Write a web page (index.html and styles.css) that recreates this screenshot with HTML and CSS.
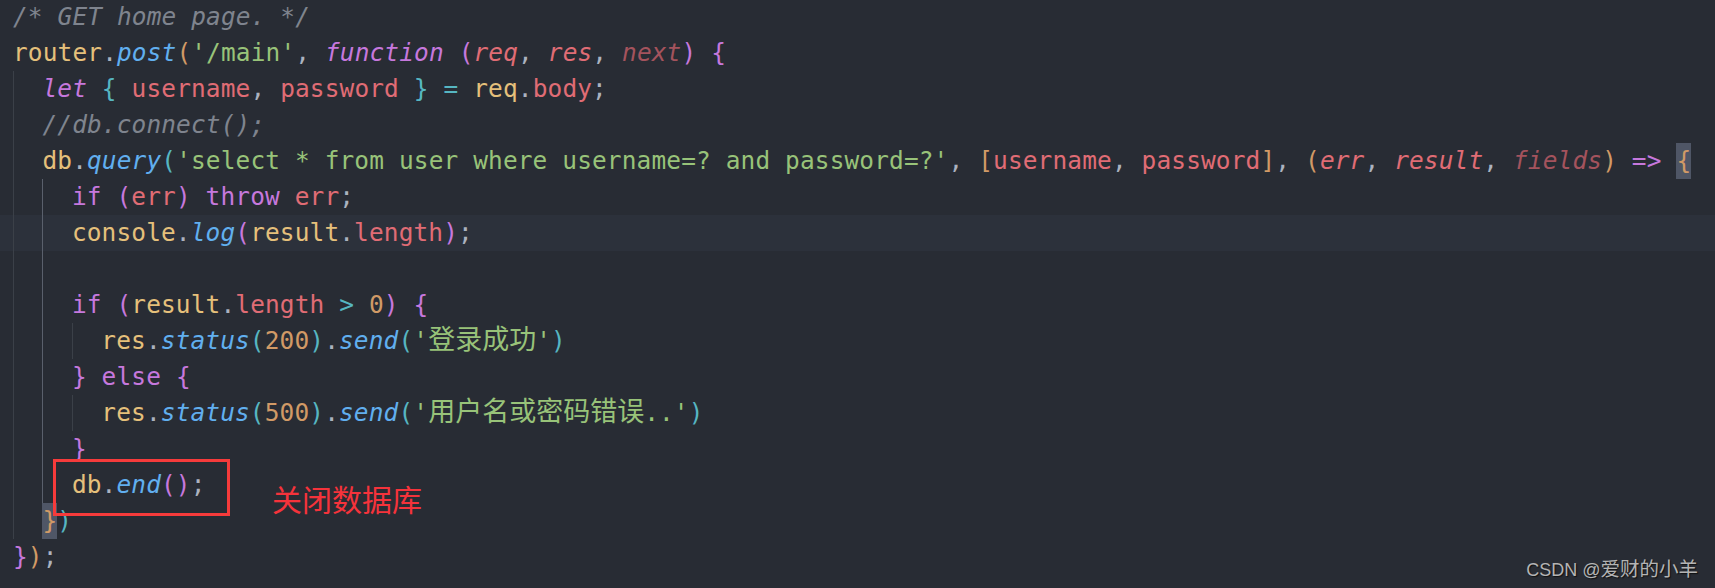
FILE: index.html
```html
<!DOCTYPE html>
<html lang="zh-CN">
<head>
<meta charset="utf-8">
<title>router.post /main</title>
<link rel="stylesheet" href="styles.css">
</head>
<body>
<div class="editor">
  <div class="code">
    <div class="ln"><span class="cm">/* GET home page. */</span></div>
    <div class="ln"><span class="y">router</span><span class="p">.</span><span class="b i">post</span><span class="o">(</span><span class="s">'/main'</span><span class="p">, </span><span class="k i">function</span> <span class="k">(</span><span class="r i">req</span><span class="p">, </span><span class="r i">res</span><span class="p">, </span><span class="r i fd">next</span><span class="k">)</span> <span class="k">{</span></div>
    <div class="ln"><span class="g"></span><span class="k i">let</span> <span class="cy">{</span> <span class="r">username</span><span class="p">,</span> <span class="r">password</span> <span class="cy">}</span> <span class="cy">=</span> <span class="y">req</span><span class="p">.</span><span class="r">body</span><span class="p">;</span></div>
    <div class="ln"><span class="g"></span><span class="cm">//db.connect();</span></div>
    <div class="ln"><span class="g"></span><span class="y">db</span><span class="p">.</span><span class="b i">query</span><span class="cy">(</span><span class="s">'select * from user where username=? and password=?'</span><span class="p">, </span><span class="o">[</span><span class="r">username</span><span class="p">, </span><span class="r">password</span><span class="o">]</span><span class="p">, </span><span class="o">(</span><span class="r i">err</span><span class="p">, </span><span class="r i">result</span><span class="p">, </span><span class="r i fd">fields</span><span class="o">)</span> <span class="k">=&gt;</span> <span class="o mt">{</span></div>
    <div class="ln"><span class="g"></span><span class="g ga"></span><span class="k">if</span> <span class="k">(</span><span class="r">err</span><span class="k">)</span> <span class="k">throw</span> <span class="r">err</span><span class="p">;</span></div>
    <div class="ln hl"><span class="g"></span><span class="g ga"></span><span class="y">console</span><span class="p">.</span><span class="b i">log</span><span class="k">(</span><span class="y">result</span><span class="p">.</span><span class="r">length</span><span class="k">)</span><span class="p">;</span></div>
    <div class="ln"><span class="g"></span><span class="g ga"></span></div>
    <div class="ln"><span class="g"></span><span class="g ga"></span><span class="k">if</span> <span class="k">(</span><span class="y">result</span><span class="p">.</span><span class="r">length</span> <span class="cy">&gt;</span> <span class="n">0</span><span class="k">)</span> <span class="k">{</span></div>
    <div class="ln"><span class="g"></span><span class="g ga"></span><span class="g"></span><span class="y">res</span><span class="p">.</span><span class="b i">status</span><span class="cy">(</span><span class="n">200</span><span class="cy">)</span><span class="p">.</span><span class="b i">send</span><span class="cy">(</span><span class="s">'<span class="zh">登录成功</span>'</span><span class="cy">)</span></div>
    <div class="ln"><span class="g"></span><span class="g ga"></span><span class="k">}</span> <span class="k">else</span> <span class="k">{</span></div>
    <div class="ln"><span class="g"></span><span class="g ga"></span><span class="g"></span><span class="y">res</span><span class="p">.</span><span class="b i">status</span><span class="cy">(</span><span class="n">500</span><span class="cy">)</span><span class="p">.</span><span class="b i">send</span><span class="cy">(</span><span class="s">'<span class="zh">用户名或密码错误</span>..'</span><span class="cy">)</span></div>
    <div class="ln"><span class="g"></span><span class="g ga"></span><span class="k">}</span></div>
    <div class="ln"><span class="g"></span><span class="g ga"></span><span class="y">db</span><span class="p">.</span><span class="b i">end</span><span class="k">()</span><span class="p">;</span></div>
    <div class="ln"><span class="g"></span><span class="o mt">}</span><span class="cy">)</span></div>
    <div class="ln"><span class="k">}</span><span class="o">)</span><span class="p">;</span></div>
  </div>
  <div class="mark-box"></div>
  <div class="mark-note">关闭数据库</div>
  <div class="watermark">CSDN @<span class="wm-zh">爱财的小羊</span></div>
</div>
</body>
</html>
```

FILE: styles.css
```css
html, body {
  margin: 0;
  padding: 0;
  background: #282c34;
}

.editor {
  position: relative;
  width: 1715px;
  height: 588px;
  overflow: hidden;
  background: #282c34;
}

.code {
  margin-top: -1px;
  font-family: "DejaVu Sans Mono", "Noto Sans CJK SC", monospace;
  font-size: 24.45px;
  letter-spacing: 0.14px;
  color: #abb2bf;
}

.ln {
  height: 36px;
  line-height: 36px;
  padding-left: 13px;
  white-space: pre;
}

.ln.hl {
  background: #2c313b;
}

.g {
  display: inline-block;
  width: 29.45px;
  height: 36px;
  vertical-align: top;
  box-shadow: inset 1px 0 0 #3b4048;
}

.g.ga {
  box-shadow: inset 1px 0 0 #5a606c;
}

.i { font-style: italic; }
.cm { color: #7f848e; font-style: italic; }
.y { color: #e5c07b; }
.b { color: #61afef; }
.s { color: #98c379; }
.k { color: #c678dd; }
.r { color: #e06c75; }
.r.fd { color: #a4535d; }
.cy { color: #56b6c2; }
.n { color: #d19a66; }
.o { color: #d19a66; }
.p { color: #abb2bf; }

.mt {
  display: inline-block;
  height: 36px;
  background: #4f5666;
  vertical-align: top;
}

.zh {
  font-family: "Noto Sans CJK SC", sans-serif;
  font-size: 27px;
  letter-spacing: 0;
  line-height: 1;
}

.mark-box {
  position: absolute;
  left: 53px;
  top: 459px;
  width: 177px;
  height: 57px;
  box-sizing: border-box;
  border: 3px solid #f63b3b;
}

.mark-note {
  position: absolute;
  left: 272px;
  top: 480px;
  font-family: "Noto Sans CJK SC", sans-serif;
  font-size: 30px;
  line-height: 36px;
  color: #f5333b;
}

.watermark {
  position: absolute;
  right: 17px;
  top: 556px;
  font-family: "Liberation Sans", "Noto Sans CJK SC", sans-serif;
  font-size: 18px;
  line-height: 24px;
  color: #b4b4b4;
  text-shadow: 1px 1px 1px #111;
}

.wm-zh {
  font-family: "Noto Sans CJK SC", sans-serif;
  font-size: 19.5px;
}
```
